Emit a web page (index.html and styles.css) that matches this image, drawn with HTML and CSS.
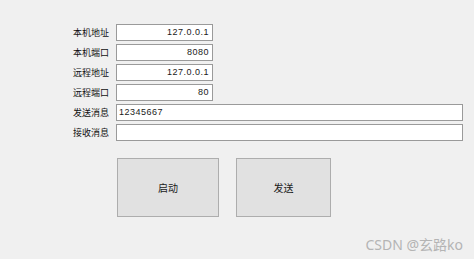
FILE: index.html
```html
<!DOCTYPE html>
<html lang="zh">
<head>
<meta charset="utf-8">
<title>Socket</title>
<link rel="stylesheet" href="styles.css">
</head>
<body>
<div class="window">
  <div class="form">
    <div class="row"><span class="label">本机地址</span><div class="field short right">127.0.0.1</div></div>
    <div class="row"><span class="label">本机端口</span><div class="field short right">8080</div></div>
    <div class="row"><span class="label">远程地址</span><div class="field short right">127.0.0.1</div></div>
    <div class="row"><span class="label">远程端口</span><div class="field short right">80</div></div>
    <div class="row"><span class="label">发送消息</span><div class="field long">12345667</div></div>
    <div class="row"><span class="label">接收消息</span><div class="field long"></div></div>
  </div>
  <div class="buttons">
    <button class="btn btn-start">启动</button>
    <button class="btn btn-send">发送</button>
  </div>
  <div class="watermark">CSDN @玄路ko</div>
</div>
</body>
</html>
```
FILE: styles.css
```css
html, body {
  margin: 0;
  padding: 0;
  background: #f0f0f0;
}
.window {
  position: relative;
  width: 474px;
  height: 259px;
  background: #f0f0f0;
  font-family: "Noto Sans CJK SC", "Liberation Sans", sans-serif;
  overflow: hidden;
}
.form {
  display: flex;
  flex-direction: column;
  gap: 3px;
  padding: 24px 0 0 73px;
}
.row {
  display: flex;
  align-items: center;
  height: 17px;
}
.label {
  width: 43px;
  font-size: 9px;
  line-height: 17px;
  color: #111111;
  white-space: nowrap;
}
.field {
  box-sizing: border-box;
  height: 17px;
  background: #ffffff;
  border: 1px solid #9a9a9a;
  font-family: "Liberation Sans", sans-serif;
  font-size: 9px;
  line-height: 15px;
  letter-spacing: 0.5px;
  color: #1a1a1a;
  padding: 0 2px;
  white-space: nowrap;
}
.short { width: 97px; }
.long { width: 347px; }
.right {
  text-align: right;
  padding-right: 3px;
}
.buttons {
  display: flex;
  gap: 17px;
  margin: 17px 0 0 117px;
}
.btn {
  box-sizing: border-box;
  height: 59px;
  background: #e1e1e1;
  border: 1px solid #adadad;
  border-radius: 0;
  font-family: "Noto Sans CJK SC", sans-serif;
  font-size: 10px;
  color: #1a1a1a;
  padding: 0;
}
.btn-start { width: 102px; }
.btn-send { width: 95px; }
.watermark {
  position: absolute;
  right: 11px;
  top: 235px;
  font-family: "Noto Sans", "Noto Sans CJK SC", sans-serif;
  font-size: 14px;
  line-height: 19px;
  color: #b4b4b4;
  white-space: nowrap;
}
```
